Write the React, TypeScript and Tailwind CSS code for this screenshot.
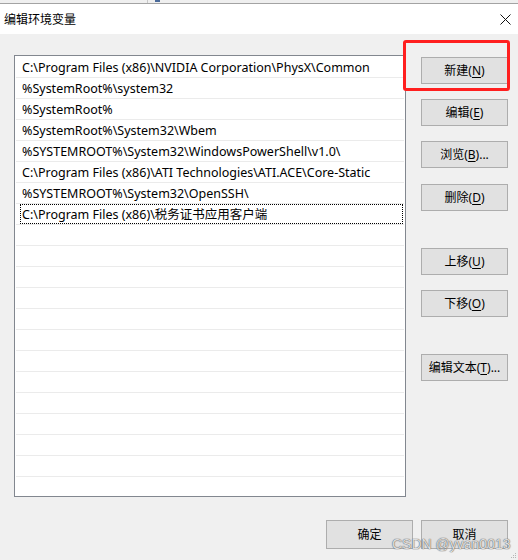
const paths = [
  "C:\\Program Files (x86)\\NVIDIA Corporation\\PhysX\\Common",
  "%SystemRoot%\\system32",
  "%SystemRoot%",
  "%SystemRoot%\\System32\\Wbem",
  "%SYSTEMROOT%\\System32\\WindowsPowerShell\\v1.0\\",
  "C:\\Program Files (x86)\\ATI Technologies\\ATI.ACE\\Core-Static",
  "%SYSTEMROOT%\\System32\\OpenSSH\\",
  "C:\\Program Files (x86)\\税务证书应用客户端",
];

const EMPTY_ROWS = 13;

function Btn({ label, hot, tail = "", className = "" }: { label: string; hot: string; tail?: string; className?: string }) {
  return (
    <button
      className={`flex h-[27px] w-[87px] items-center justify-center border border-[#adadad] bg-[#e1e1e1] pt-[1px] text-[12px] text-black ${className}`}
    >
      {label}(<span className="underline underline-offset-2">{hot}</span>){tail}
    </button>
  );
}

export default function App() {
  return (
    <div
      className="relative flex h-[560px] w-[518px] flex-col overflow-hidden bg-[#f0f0f0]"
      style={{ fontFamily: '"Noto Sans", "Noto Sans CJK SC", sans-serif' }}
    >
      {/* strip of the window behind */}
      <div className="relative h-[4px] border-b border-[#a3a3a3] bg-[#efefef]">
        <div className="absolute left-[147px] top-0 h-[3px] w-px bg-[#c8c8c8]" />
        <div className="absolute left-[155px] top-0 h-[2px] w-[5px] bg-[#4a6a9a]" />
      </div>

      {/* title bar */}
      <div className="flex h-[30px] items-center justify-between bg-white pl-[4px] pr-[7px]">
        <span className="pt-[1px] text-[12px] text-black">编辑环境变量</span>
        <svg width="11" height="11" viewBox="0 0 11 11" className="mt-[1px]">
          <path d="M0.5 0.5 L10.5 10.5 M10.5 0.5 L0.5 10.5" stroke="#111" strokeWidth="1" fill="none" />
        </svg>
      </div>

      <div className="flex flex-1 flex-col">
        <div className="flex pl-[14px] pt-[21px]">
          {/* path list */}
          <div className="h-[442px] w-[392px] overflow-hidden border border-[#82878f] bg-white px-[1px] pt-[1px]">
            {paths.map((p, i) => (
              <div key={i} className="flex h-[21px] items-center border-b border-[#ebebeb] pl-[4px] pr-[1px]">
                <div
                  className={`flex h-[20px] w-full items-center whitespace-nowrap pl-[1px] pt-[2px] text-[12.5px] text-black ${
                    i === paths.length - 1 ? "border border-dotted border-black" : "border border-transparent"
                  }`}
                >
                  {p}
                </div>
              </div>
            ))}
            {Array.from({ length: EMPTY_ROWS }).map((_, i) => (
              <div key={i} className="h-[21px] border-b border-[#ebebeb]" />
            ))}
          </div>

          {/* side buttons */}
          <div className="ml-[15px] flex flex-col">
            <Btn label="新建" hot="N" className="mt-[2px]" />
            <Btn label="编辑" hot="E" className="mt-[15px]" />
            <Btn label="浏览" hot="B" tail="..." className="mt-[15px]" />
            <Btn label="删除" hot="D" className="mt-[16px]" />
            <Btn label="上移" hot="U" className="mt-[37px]" />
            <Btn label="下移" hot="O" className="mt-[15px]" />
            <Btn label="编辑文本" hot="T" tail="..." className="mt-[37px]" />
          </div>
        </div>

        {/* dialog buttons */}
        <div className="mt-[23px] flex justify-end gap-[8px] pr-[10px]">
          <button className="flex h-[29px] w-[87px] items-center justify-center border border-[#adadad] bg-[#e1e1e1] text-[12px] text-black">
            确定
          </button>
          <button className="flex h-[29px] w-[87px] items-center justify-center border border-[#adadad] bg-[#e1e1e1] text-[12px] text-black">
            取消
          </button>
        </div>
      </div>

      {/* annotation box round the first button */}
      <div className="pointer-events-none absolute left-[403px] top-[40px] h-[51px] w-[107px] rounded-[3px] border-[3px] border-[#ff1f1f]" />

      {/* watermark */}
      <div
        className="pointer-events-none absolute left-[392px] top-[534px] text-[14px] text-white/80"
        style={{ fontFamily: '"Liberation Sans", sans-serif', textShadow: "0 0 1px #555, 0 0 1px #555" }}
      >
        CSDN @yvan0013
      </div>

      {/* resize grip */}
      <svg width="6" height="6" viewBox="0 0 6 6" className="absolute bottom-[1px] right-[1px]">
        <rect x="4" y="0" width="1" height="1" fill="#b5b5b5" />
        <rect x="2" y="2" width="1" height="1" fill="#b5b5b5" />
        <rect x="4" y="2" width="1" height="1" fill="#b5b5b5" />
        <rect x="0" y="4" width="1" height="1" fill="#b5b5b5" />
        <rect x="2" y="4" width="1" height="1" fill="#b5b5b5" />
        <rect x="4" y="4" width="1" height="1" fill="#b5b5b5" />
      </svg>
    </div>
  );
}
